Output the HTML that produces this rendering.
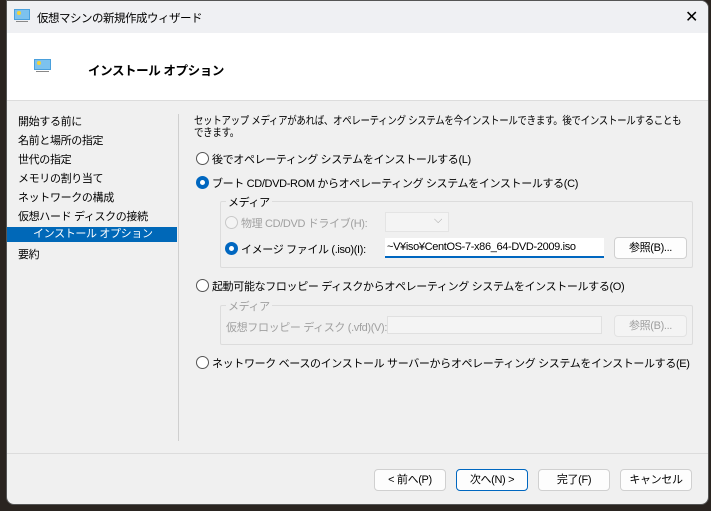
<!DOCTYPE html>
<html><head><meta charset="utf-8"><style>
*{margin:0;padding:0;box-sizing:border-box}
body{width:711px;height:511px;overflow:hidden;background:#2a2420;font-family:"Liberation Sans","Noto Sans CJK JP",sans-serif;font-size:11px;letter-spacing:-0.35px;color:#000;position:relative}
.win{position:absolute;left:6px;top:0;width:703px;height:505px;background:#f0f0f0;border-radius:0 8px 8px 8px;overflow:hidden;border:1px solid #555}
.a{position:absolute;white-space:nowrap}
.title{position:absolute;left:0;top:0;width:100%;height:32px;background:#eff0f3}
.head{position:absolute;left:0;top:32px;width:100%;height:68px;background:#fff;border-bottom:1px solid #dcdcdc}
.nav div{position:absolute;left:11px;white-space:nowrap}
.radio{position:absolute;width:13px;height:13px;border-radius:50%;border:1px solid #555;background:#fff}
.radio.on{background:#0067c0;border-color:#0067c0}
.radio.on::after{content:"";position:absolute;left:3px;top:3px;width:5px;height:5px;border-radius:50%;background:#fff}
.radio.dis{border-color:#c8c8c8;background:#f4f4f4}
.grp{position:absolute;border:1px solid #dcdcdc;border-radius:2px}
.btn{position:absolute;height:22px;border:1px solid #d0d0d0;border-radius:4px;background:#fdfdfd;text-align:center;line-height:20px}
.dis{color:#a0a0a0}
</style></head><body>
<div class="win">
<div class="title">
<svg class="a" style="left:7px;top:8px" width="16" height="14"><rect x="0" y="0" width="16" height="11" fill="#4aa0dc"/><rect x="1" y="1" width="14" height="9" fill="#7cc2ee"/><circle cx="5" cy="4" r="2" fill="#f3d23a"/><rect x="2" y="12" width="12" height="1" fill="#888"/></svg>
<div class="a" style="left:30px;top:9px;font-size:11.5px;letter-spacing:-0.5px">仮想マシンの新規作成ウィザード</div>
<div class="a" style="left:678px;top:6px;font-size:16px;font-weight:300">✕</div>
</div>
<div class="head">
<svg class="a" style="left:27px;top:26px" width="17" height="14"><rect x="0" y="0" width="17" height="11" fill="#4aa0dc"/><rect x="1" y="1" width="15" height="9" fill="#7cc2ee"/><circle cx="5" cy="4" r="2" fill="#f3d23a"/><rect x="2" y="12" width="13" height="1" fill="#888"/></svg>
<div class="a" style="left:81px;top:27px;font-size:12.5px;font-weight:bold;letter-spacing:-0.4px">インストール オプション</div>
</div>
<div class="nav">
<div style="top:112px">開始する前に</div>
<div style="top:131px">名前と場所の指定</div>
<div style="top:150px">世代の指定</div>
<div style="top:169px">メモリの割り当て</div>
<div style="top:188px">ネットワークの構成</div>
<div style="top:207px">仮想ハード ディスクの接続</div>
<div style="top:226px;left:0;width:170px;height:15px;background:#0068b8;color:#fff;padding-left:26px;line-height:15px">インストール オプション</div>
<div style="top:245px">要約</div>
</div>
<div class="a" style="left:171px;top:113px;width:1px;height:327px;background:#cfcfcf"></div>
<div class="a" style="left:187px;top:114px;line-height:12px;letter-spacing:-0.35px;transform:scaleX(0.86);transform-origin:0 0">セットアップ メディアがあれば、オペレーティング システムを今インストールできます。後でインストールすることも<br>できます。</div>
<div class="radio" style="left:189px;top:151px"></div>
<div class="a" style="left:205px;top:150px">後でオペレーティング システムをインストールする(L)</div>
<div class="radio on" style="left:189px;top:175px"></div>
<div class="a" style="left:205px;top:174px">ブート CD/DVD-ROM からオペレーティング システムをインストールする(C)</div>
<div class="grp" style="left:213px;top:200px;width:473px;height:67px"></div>
<div class="a" style="left:219px;top:193px;background:#f0f0f0;padding:0 2px">メディア</div>
<div class="radio dis" style="left:218px;top:215px"></div>
<div class="a dis" style="left:234px;top:214px">物理 CD/DVD ドライブ(H):</div>
<div class="a" style="left:378px;top:211px;width:64px;height:20px;border:1px solid #e4e4e4;background:#f4f4f4"><span class="a dis" style="right:6px;top:1px">⌵</span></div>
<div class="radio on" style="left:218px;top:241px"></div>
<div class="a" style="left:234px;top:240px">イメージ ファイル (.iso)(I):</div>
<div class="a" style="left:378px;top:237px;width:219px;height:20px;background:#fff;border-bottom:2px solid #0067c0;line-height:18px;overflow:hidden"><span style="padding-left:2px">~V¥iso¥CentOS-7-x86_64-DVD-2009.iso</span></div>
<div class="btn" style="left:607px;top:236px;width:73px">参照(B)...</div>
<div class="radio" style="left:189px;top:278px"></div>
<div class="a" style="left:205px;top:277px">起動可能なフロッピー ディスクからオペレーティング システムをインストールする(O)</div>
<div class="grp" style="left:213px;top:304px;width:473px;height:40px"></div>
<div class="a dis" style="left:219px;top:297px;background:#f0f0f0;padding:0 2px">メディア</div>
<div class="a dis" style="left:219px;top:318px">仮想フロッピー ディスク (.vfd)(V):</div>
<div class="a" style="left:380px;top:315px;width:215px;height:18px;border:1px solid #e0e0e0;background:#f4f4f4"></div>
<div class="btn dis" style="left:607px;top:314px;width:73px;background:#f4f4f4;border-color:#e2e2e2">参照(B)...</div>
<div class="radio" style="left:189px;top:355px"></div>
<div class="a" style="left:205px;top:354px">ネットワーク ベースのインストール サーバーからオペレーティング システムをインストールする(E)</div>
<div class="a" style="left:0;top:452px;width:100%;height:1px;background:#dcdcdc"></div>
<div class="btn" style="left:367px;top:468px;width:72px">&lt; 前へ(P)</div>
<div class="btn" style="left:449px;top:468px;width:72px;border-color:#0067c0">次へ(N) &gt;</div>
<div class="btn" style="left:531px;top:468px;width:72px">完了(F)</div>
<div class="btn" style="left:613px;top:468px;width:72px">キャンセル</div>
</div>
</body></html>
